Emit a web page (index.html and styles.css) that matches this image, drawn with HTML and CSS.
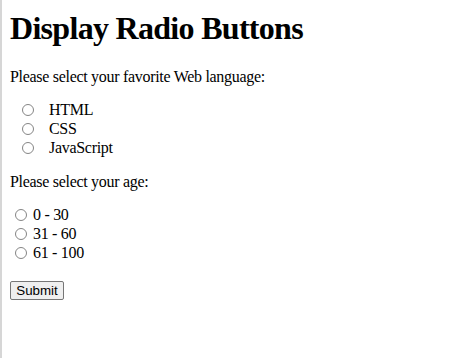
FILE: index.html
```html
<!DOCTYPE html>
<html>
<head>
<meta charset="utf-8">
<title>Display Radio Buttons</title>
<link rel="stylesheet" href="styles.css">
</head>
<body>
<main class="page">
  <h1 class="title">Display Radio Buttons</h1>
  <form class="form">
    <p class="question">Please select your favorite Web language:</p>
    <div class="group group-lang">
      <label class="option"><input class="radio" type="radio" name="fav_language" value="HTML"><span class="text">HTML</span></label>
      <label class="option"><input class="radio" type="radio" name="fav_language" value="CSS"><span class="text">CSS</span></label>
      <label class="option"><input class="radio" type="radio" name="fav_language" value="JavaScript"><span class="text">JavaScript</span></label>
    </div>
    <p class="question question-age">Please select your age:</p>
    <div class="group group-age">
      <label class="option"><input class="radio" type="radio" name="age" value="30"><span class="text">0 - 30</span></label>
      <label class="option"><input class="radio" type="radio" name="age" value="60"><span class="text">31 - 60</span></label>
      <label class="option"><input class="radio" type="radio" name="age" value="100"><span class="text">61 - 100</span></label>
    </div>
    <div class="actions"><button class="submit" type="button">Submit</button></div>
  </form>
</main>
</body>
</html>
```
FILE: styles.css
```css
html, body {
  margin: 0;
  padding: 0;
  background: #fff;
}
body {
  font-family: "Liberation Serif", "Times New Roman", serif;
  font-size: 16px;
  color: #000;
}
.page {
  min-height: 358px;
  box-sizing: border-box;
  border-left: 2px solid #d6d6d6;
  padding: 10px 0 0 8px;
}
.title {
  margin: 0;
  font-size: 32px;
  line-height: 37px;
  font-weight: bold;
  letter-spacing: -0.7px;
}
.form {
  margin-top: 20px;
  letter-spacing: -0.3px;
}
.question {
  margin: 0;
  line-height: 19px;
}
.question-age {
  margin-top: 15px;
}
.group {
  display: flex;
  flex-direction: column;
  margin-top: 14px;
}
.group-age {
  margin-top: 14px;
}
.option {
  display: flex;
  align-items: center;
  height: 19px;
  line-height: 19px;
}
.radio {
  appearance: none;
  -webkit-appearance: none;
  width: 12px;
  height: 12px;
  margin: 0;
  border: 1px solid #858585;
  border-radius: 50%;
  background: #fff;
  box-sizing: border-box;
  flex: none;
  position: relative;
  top: 0;
}
.group-lang .option {
  padding-left: 12px;
}
.group-lang .text {
  margin-left: 15px;
}
.group-age .option {
  padding-left: 5px;
}
.group-age .text {
  margin-left: 6px;
}
.actions {
  margin-top: 19px;
}
.submit {
  font-family: "Liberation Sans", Arial, sans-serif;
  font-size: 13.333px;
  letter-spacing: 0;
  color: #000;
  background: #efefef;
  border: 1px solid #767676;
  border-radius: 2px;
  width: 54px;
  height: 19px;
  padding: 0;
  margin: 0;
  line-height: 17px;
}
```
